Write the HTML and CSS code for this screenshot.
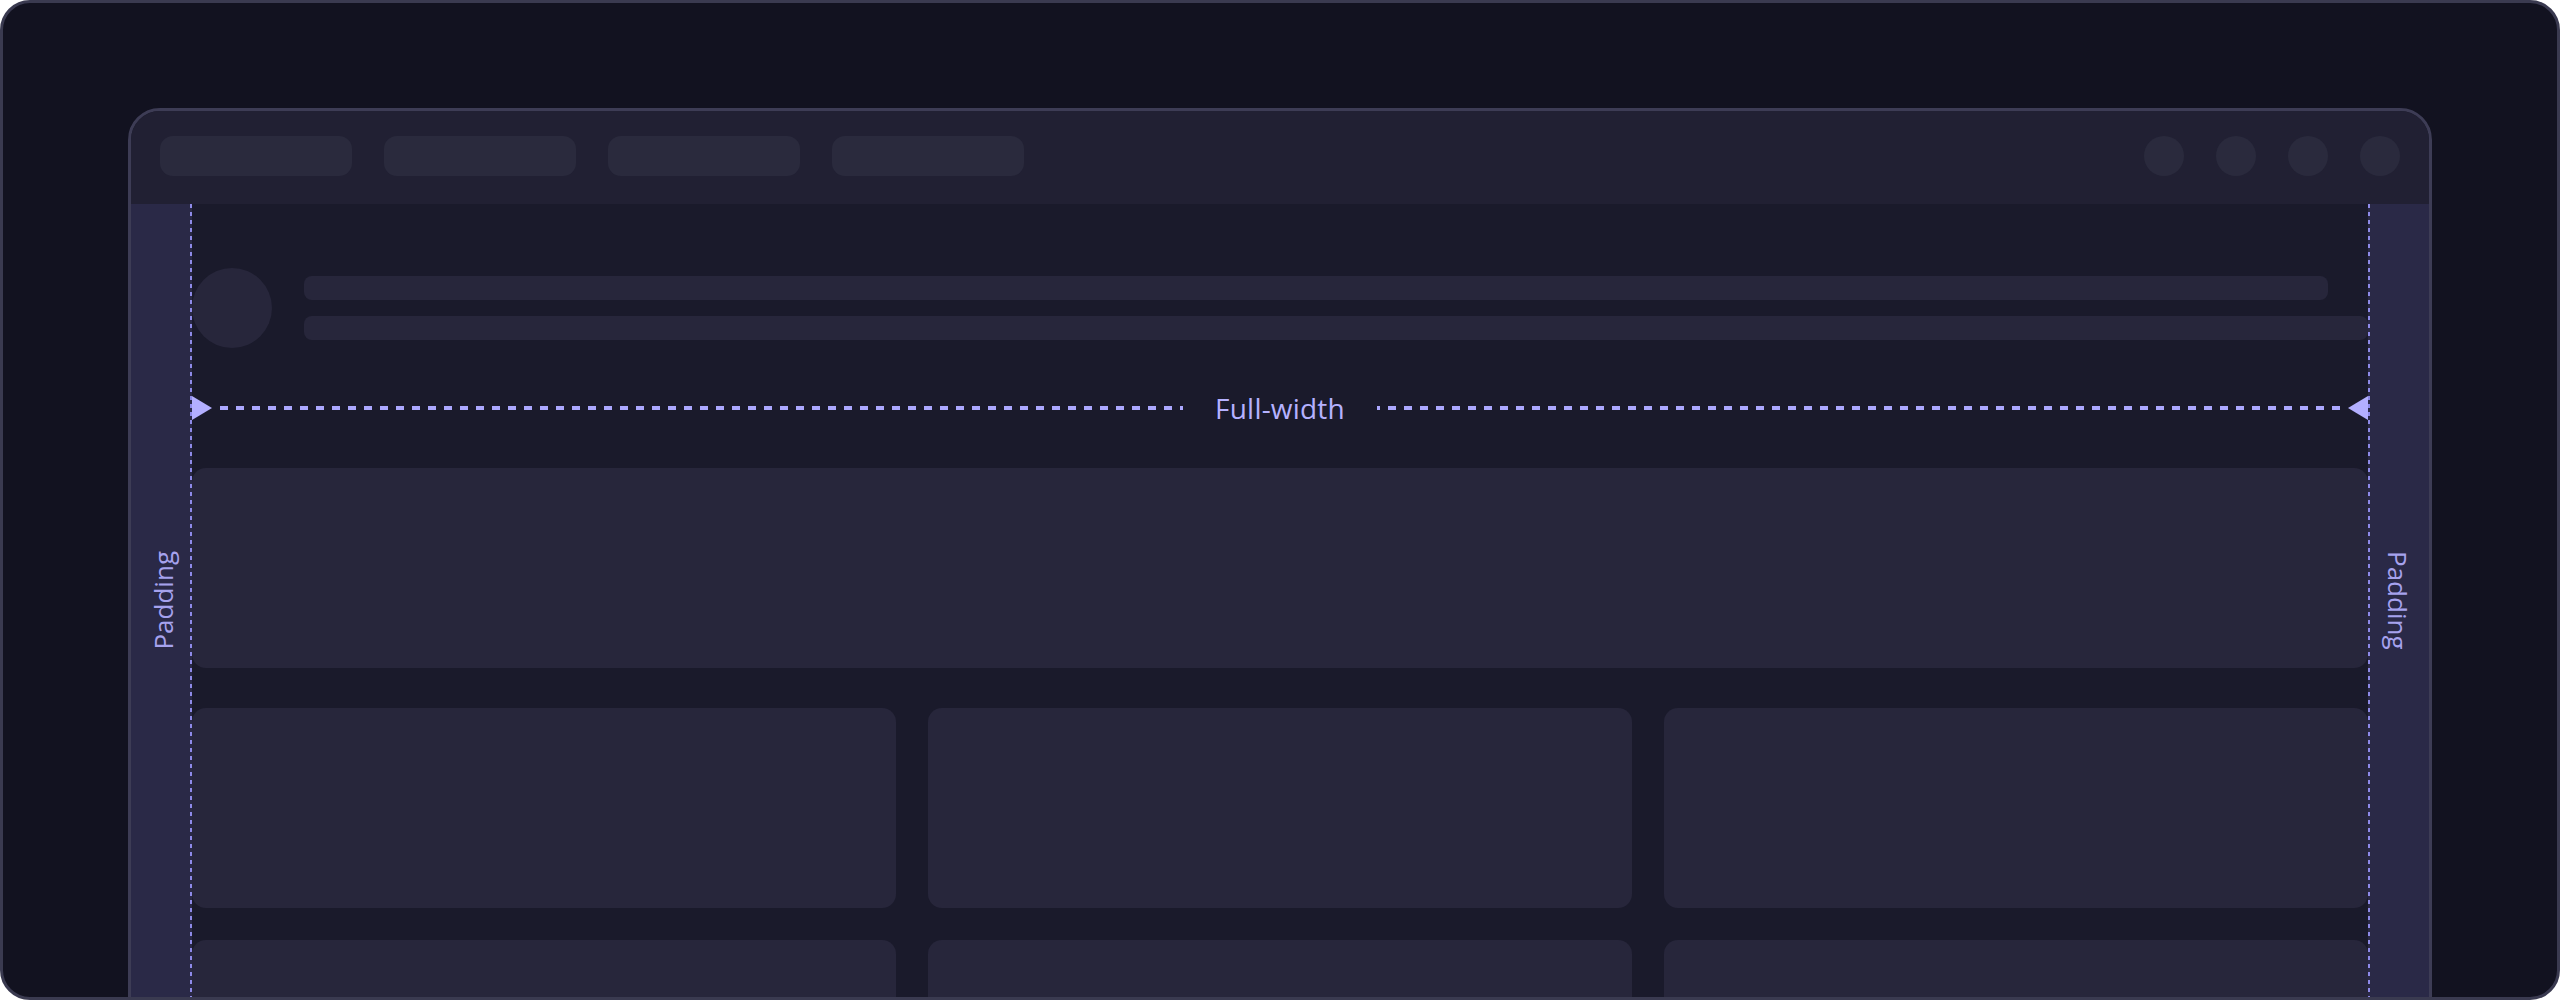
FILE: index.html
```html
<!DOCTYPE html>
<html lang="en">
<head>
  <meta charset="UTF-8">
  <meta name="viewport" content="width=device-width, initial-scale=1.0">
  <title>Full-width layout</title>
  <link rel="stylesheet" href="styles.css">
</head>
<body>

  <div class="frame">
    <div class="window">

      <header class="toolbar">
        <div class="tabs">
          <span class="tab"></span>
          <span class="tab"></span>
          <span class="tab"></span>
          <span class="tab"></span>
        </div>
        <div class="actions">
          <span class="dot"></span>
          <span class="dot"></span>
          <span class="dot"></span>
          <span class="dot"></span>
        </div>
      </header>

      <div class="viewport">
        <aside class="gutter gutter-left"><span class="gutter-label">Padding</span></aside>

        <main class="content">
          <div class="profile">
            <div class="avatar"></div>
            <div class="profile-lines">
              <div class="bar bar-short"></div>
              <div class="bar"></div>
            </div>
          </div>

          <div class="measure">
            <span class="measure-head head-start"></span>
            <span class="measure-line line-start"></span>
            <span class="measure-label">Full-width</span>
            <span class="measure-line line-end"></span>
            <span class="measure-head head-end"></span>
          </div>

          <div class="hero"></div>

          <div class="cards">
            <div class="card"></div>
            <div class="card"></div>
            <div class="card"></div>
            <div class="card"></div>
            <div class="card"></div>
            <div class="card"></div>
          </div>
        </main>

        <aside class="gutter gutter-right"><span class="gutter-label">Padding</span></aside>
      </div>

    </div>
  </div>

</body>
</html>
```

FILE: styles.css
```css
:root {
  --frame-bg: #121220;
  --frame-border: #3a3a50;
  --window-border: #3d3c55;
  --toolbar-bg: #212033;
  --toolbar-chip: #2a2a3d;
  --page-bg: #1a1a2b;
  --block: #27263b;
  --gutter: #2a2947;
  --accent: #aca8ff;
  --accent-soft: #8e8ae8;
}

* {
  box-sizing: border-box;
}

body {
  margin: 0;
  background: #fff;
  font-family: 'Open Sans', 'Noto Sans', sans-serif;
}

.frame {
  width: 2560px;
  height: 1000px;
  padding: 105px 125px 0;
  background: var(--frame-bg);
  border: 3px solid var(--frame-border);
  border-radius: 30px;
  overflow: hidden;
}

.window {
  display: flex;
  flex-direction: column;
  height: 892px;
  background: var(--page-bg);
  border: 3px solid var(--window-border);
  border-radius: 32px 32px 0 0;
  overflow: hidden;
}

/* top bar */
.toolbar {
  display: flex;
  align-items: center;
  justify-content: space-between;
  height: 93px;
  padding: 0 29px 3px;
  background: var(--toolbar-bg);
  flex-shrink: 0;
}

.tabs, .actions {
  display: flex;
  gap: 32px;
}

.tab {
  width: 192px;
  height: 40px;
  border-radius: 13px;
  background: var(--toolbar-chip);
}

.dot {
  width: 40px;
  height: 40px;
  border-radius: 50%;
  background: var(--toolbar-chip);
}

/* page area with padding gutters */
.viewport {
  flex: 1;
  display: grid;
  grid-template-columns: 61px 1fr 61px;
  min-height: 0;
}

.gutter {
  display: flex;
  align-items: center;
  justify-content: center;
  background-color: var(--gutter);
  background-repeat: no-repeat;
  background-size: 2px 100%;
  background-image: repeating-linear-gradient(to bottom, var(--accent-soft) 0 4px, transparent 4px 8px);
}

.gutter-left {
  background-position: right top;
}

.gutter-right {
  background-position: left top;
}

.gutter-label {
  writing-mode: vertical-rl;
  font-size: 26px;
  color: #a6a2ee;
  line-height: 1;
}

.gutter-left .gutter-label {
  transform: rotate(180deg);
  margin-left: 2px;
}

.gutter-right .gutter-label {
  margin-right: 2px;
}

.content {
  padding-top: 64px;
  overflow: hidden;
}

/* avatar + text lines */
.profile {
  display: flex;
  align-items: center;
  gap: 32px;
}

.avatar {
  width: 80px;
  height: 80px;
  border-radius: 50%;
  background: var(--block);
  flex-shrink: 0;
}

.profile-lines {
  flex: 1;
  display: flex;
  flex-direction: column;
  gap: 16px;
}

.bar {
  height: 24px;
  border-radius: 8px;
  background: var(--block);
}

.bar-short {
  margin-right: 40px;
}

/* width indicator */
.measure {
  display: flex;
  align-items: center;
  height: 120px;
}

.measure-head {
  width: 20px;
  height: 24px;
  background: #b3afff;
  flex-shrink: 0;
}

.head-start {
  clip-path: polygon(0 0, 100% 50%, 0 100%);
}

.head-end {
  clip-path: polygon(100% 0, 0 50%, 100% 100%);
}

.measure-line {
  flex: 1;
  height: 4px;
  background: repeating-linear-gradient(to right, var(--accent) 0 8px, transparent 8px 16px);
}

.line-start {
  margin-left: 8px;
}

.line-end {
  margin-right: 8px;
  background: repeating-linear-gradient(to left, var(--accent) 0 8px, transparent 8px 16px);
}

.measure-label {
  padding: 0 32px;
  font-size: 28px;
  line-height: 1;
  letter-spacing: 0.2px;
  color: #b5b1ff;
}

.hero {
  height: 200px;
  border-radius: 14px;
  background: var(--block);
}

.cards {
  display: grid;
  grid-template-columns: repeat(3, 1fr);
  gap: 32px;
  margin-top: 40px;
}

.card {
  height: 200px;
  border-radius: 14px;
  background: var(--block);
}
```
